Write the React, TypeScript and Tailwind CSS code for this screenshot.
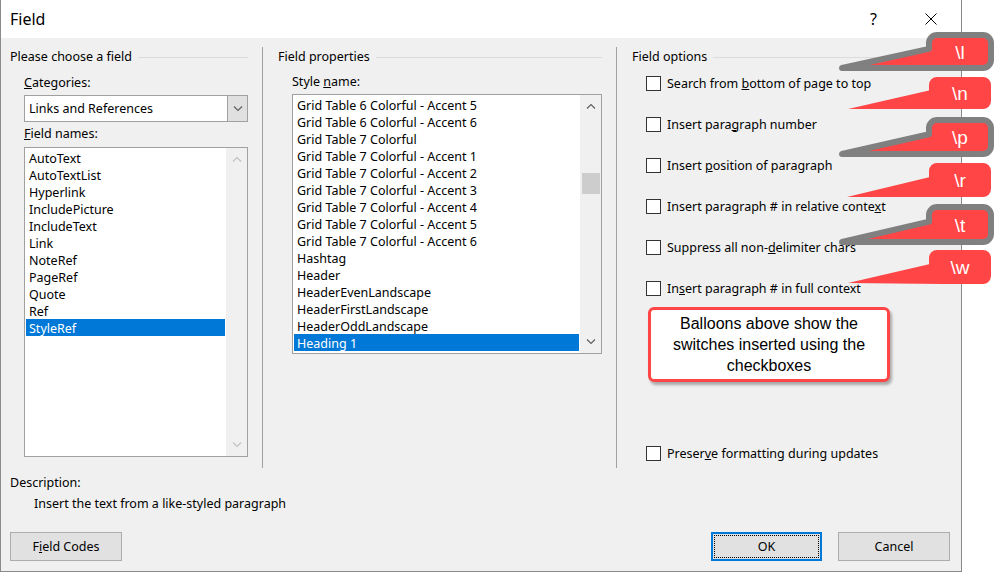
import React from "react";

const leftItems = ["AutoText", "AutoTextList", "Hyperlink", "IncludePicture", "IncludeText", "Link", "NoteRef", "PageRef", "Quote", "Ref", "StyleRef"];

const styleItems = [
  "Grid Table 6 Colorful - Accent 5",
  "Grid Table 6 Colorful - Accent 6",
  "Grid Table 7 Colorful",
  "Grid Table 7 Colorful - Accent 1",
  "Grid Table 7 Colorful - Accent 2",
  "Grid Table 7 Colorful - Accent 3",
  "Grid Table 7 Colorful - Accent 4",
  "Grid Table 7 Colorful - Accent 5",
  "Grid Table 7 Colorful - Accent 6",
  "Hashtag",
  "Header",
  "HeaderEvenLandscape",
  "HeaderFirstLandscape",
  "HeaderOddLandscape",
  "Heading 1",
];

const options: [string, string, string][] = [
  ["Search from ", "b", "ottom of page to top"],
  ["Insert para", "g", "raph number"],
  ["Insert ", "p", "osition of paragraph"],
  ["Insert paragraph # in relative conte", "x", "t"],
  ["Suppress all non-", "d", "elimiter chars"],
  ["In", "s", "ert paragraph # in full context"],
];

// balloons: body box, tail tip, selected (gray outline)
const balloons = [
  { t: "\\l", y1: 35, y2: 68, tx: 842, ty: 68, sel: true },
  { t: "\\n", y1: 77, y2: 109, tx: 848, ty: 109, sel: false },
  { t: "\\p", y1: 120, y2: 154, tx: 842, ty: 154, sel: true },
  { t: "\\r", y1: 163, y2: 197, tx: 847, ty: 197, sel: false },
  { t: "\\t", y1: 207, y2: 242, tx: 842, ty: 242, sel: true },
  { t: "\\w", y1: 250, y2: 284, tx: 848, ty: 283, sel: false },
];

function balloonPath(y1: number, y2: number, tx: number, ty: number) {
  const x1 = 929;
  const x2 = 991;
  const r = 8;
  const h = y2 - y1;
  return `M${x1 + r} ${y1} H${x2 - r} A${r} ${r} 0 0 1 ${x2} ${y1 + r} V${y2 - r} A${r} ${r} 0 0 1 ${x2 - r} ${y2} H${x1 + 14} L${tx} ${ty} L${x1} ${y1 + h * 0.42} V${y1 + r} A${r} ${r} 0 0 1 ${x1 + r} ${y1} Z`;
}

function Chevron({ up, color }: { up?: boolean; color: string }) {
  return (
    <svg width="10" height="6" viewBox="0 0 10 6">
      <polyline points={up ? "1,5.5 5,1.5 9,5.5" : "1,0.5 5,4.5 9,0.5"} fill="none" stroke={color} strokeWidth="1.2" />
    </svg>
  );
}

function GroupHeader({ title }: { title: string }) {
  return (
    <div className="flex items-center h-[18px] leading-[18px] pt-[2px]">
      <span>{title}</span>
      <div className="flex-1 h-px bg-[#dcdcdc] ml-[6px]" />
    </div>
  );
}

function Checkbox() {
  return <div className="w-[15px] h-[15px] border border-[#333] bg-white shrink-0" />;
}

export default function App() {
  return (
    <div className="relative w-[997px] h-[572px] bg-white overflow-hidden text-[12.5px] text-black font-['Noto_Sans',sans-serif]">
      <div className="w-[962px] h-[572px] border-l border-r border-b border-[#8a8a8a] flex flex-col">
        {/* title bar */}
        <div className="h-[38px] bg-white flex items-center pl-[9px] shrink-0">
          <span className="text-[16px]">Field</span>
          <span className="ml-auto text-[16px] mr-[48px]">?</span>
          <svg width="12" height="12" viewBox="0 0 12 12" className="mr-[24px]">
            <path d="M0.5 0.5 L11.5 11.5 M11.5 0.5 L0.5 11.5" stroke="#000" strokeWidth="1" />
          </svg>
        </div>

        <div className="flex-1 bg-[#f0f0f0] flex flex-col pl-[9px]">
          <div className="flex h-[421px] mt-[9px]">
            {/* left column */}
            <div className="w-[238px] flex flex-col">
              <GroupHeader title="Please choose a field" />
              <div className="ml-[14px] mt-[10px] leading-[16px]">
                <span className="underline">C</span>ategories:
              </div>
              <div className="ml-[14px] mt-[4px] h-[27px] border border-[#a0a0a0] bg-white flex items-center">
                <span className="pl-[4px] pt-[2px] flex-1">Links and References</span>
                <div className="w-[20px] h-full bg-[#e0e0e0] border-l border-[#a0a0a0] flex items-center justify-center">
                  <Chevron color="#606060" />
                </div>
              </div>
              <div className="ml-[14px] mt-[4px] leading-[16px]">
                <span className="underline">F</span>ield names:
              </div>
              <div className="ml-[14px] mt-[5px] h-[310px] border border-[#a0a0a0] bg-white flex">
                <div className="flex-1 p-px flex flex-col">
                  {leftItems.map((it) => (
                    <div key={it} className={`h-[17px] leading-[19px] px-[3px] ${it === "StyleRef" ? "bg-[#0078d7] text-white" : ""}`}>
                      {it}
                    </div>
                  ))}
                </div>
                <div className="w-[21px] bg-[#f0f0f0] flex flex-col items-center justify-between py-[8px]">
                  <Chevron up color="#c2c2c2" />
                  <Chevron color="#c2c2c2" />
                </div>
              </div>
            </div>

            <div className="w-px bg-[#a0a0a0] ml-[14px]" />

            {/* middle column */}
            <div className="w-[324px] ml-[15px] flex flex-col">
              <GroupHeader title="Field properties" />
              <div className="ml-[14px] mt-[9px] leading-[16px]">
                Style <span className="underline">n</span>ame:
              </div>
              <div className="ml-[14px] mt-[4px] h-[260px] border border-[#a0a0a0] bg-white flex">
                <div className="flex-1 p-px flex flex-col">
                  {styleItems.map((it) => (
                    <div key={it} className={`h-[17px] leading-[19px] px-[3px] whitespace-nowrap ${it === "Heading 1" ? "bg-[#0078d7] text-white" : ""}`}>
                      {it}
                    </div>
                  ))}
                </div>
                <div className="w-[21px] bg-[#f0f0f0] flex flex-col items-center py-[8px]">
                  <Chevron up color="#606060" />
                  <div className="w-[18px] h-[21px] bg-[#cdcdcd] mt-[64px]" />
                  <div className="mt-auto">
                    <Chevron color="#606060" />
                  </div>
                </div>
              </div>
            </div>

            <div className="w-px bg-[#a0a0a0] ml-[14px]" />

            {/* right column */}
            <div className="w-[316px] ml-[15px] flex flex-col">
              <GroupHeader title="Field options" />
              <div className="flex flex-col gap-[25px] mt-[10px]">
                {options.map(([a, k, b]) => (
                  <div key={a + b} className="flex items-center h-[16px] ml-[14px]">
                    <Checkbox />
                    <span className="ml-[6px] whitespace-nowrap pt-[2px]">
                      {a}
                      <span className="underline">{k}</span>
                      {b}
                    </span>
                  </div>
                ))}
              </div>
              <div className="mt-auto mb-[7px] flex items-center h-[16px] ml-[14px]">
                <Checkbox />
                <span className="ml-[6px] pt-[2px]">
                  Preser<span className="underline">v</span>e formatting during updates
                </span>
              </div>
            </div>
          </div>

          <div className="mt-[7px] leading-[16px]">Description:</div>
          <div className="mt-[5px] ml-[24px] leading-[16px]">Insert the text from a like-styled paragraph</div>

          <div className="flex mt-[20px] pr-[11px]">
            <button className="w-[112px] h-[29px] pt-[2px] bg-[#e1e1e1] border border-[#adadad]">
              F<span className="underline">i</span>eld Codes
            </button>
            <button className="ml-auto w-[111px] h-[29px] bg-[#e1e1e1] border-2 border-[#0078d7] p-px">
              <div className="w-full h-full pt-[2px] border border-dotted border-black flex items-center justify-center">OK</div>
            </button>
            <button className="ml-[16px] w-[112px] h-[29px] pt-[2px] bg-[#e1e1e1] border border-[#adadad]">Cancel</button>
          </div>
        </div>
      </div>

      {/* annotation balloons */}
      <svg className="absolute left-0 top-0 pointer-events-none" width="997" height="572">
        {balloons.map((b) => (
          <g key={b.t}>
            <path
              d={balloonPath(b.y1, b.y2, b.tx, b.ty)}
              fill="#ff4545"
              stroke={b.sel ? "#808080" : "none"}
              strokeWidth={b.sel ? 6 : 0}
              strokeLinejoin="round"
            />
            <text
              x="960"
              y={(b.y1 + b.y2) / 2 + 7}
              textAnchor="middle"
              fill="#fff"
              fontSize="19"
              fontFamily="'Liberation Sans', Arial, sans-serif"
            >
              {b.t}
            </text>
          </g>
        ))}
      </svg>

      <div className="absolute left-[648px] top-[307px] w-[242px] h-[75px] bg-white border-[3px] border-[#ff4545] rounded-[6px] shadow-[2px_3px_3px_rgba(0,0,0,0.3)] flex items-center justify-center text-center text-[16px] leading-[21px] font-['Liberation_Sans',Arial,sans-serif]">
        Balloons above show the switches inserted using the checkboxes
      </div>
    </div>
  );
}
